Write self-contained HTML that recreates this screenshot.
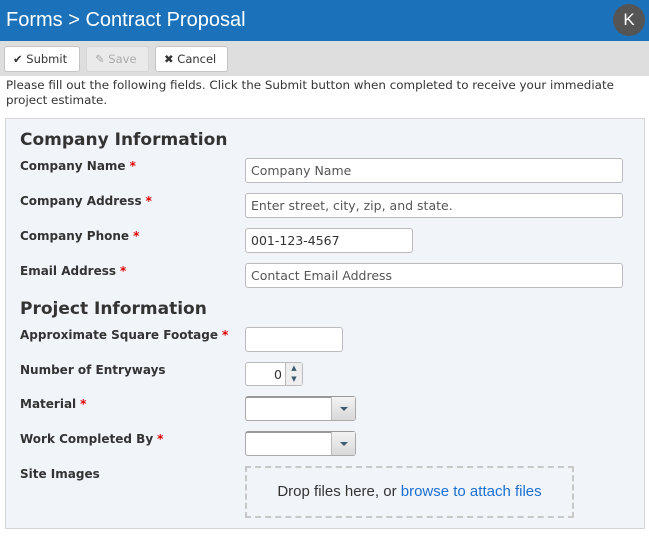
<!DOCTYPE html>
<html><head><style>
*{box-sizing:border-box}
body{margin:0;width:649px;height:537px;background:#fff;font-family:"DejaVu Sans",Verdana,sans-serif;color:#333;overflow:hidden;position:relative}
.hdr{position:absolute;left:0;top:0;width:649px;height:41px;background:#1c72ba;color:#fff;font-family:"Liberation Sans",sans-serif;font-size:20px;line-height:40px;padding-left:6px}
.av{position:absolute;right:4px;top:3px;width:32px;height:32px;border-radius:50%;background:#555;color:#fff;font-size:17px;text-align:center;line-height:32px}
.tb{position:absolute;top:41px;left:0;width:649px;height:35px;background:#dedede}
.btn{position:absolute;top:5px;height:26px;border:1px solid #c5c5c5;border-radius:3px;background:#fff;font-size:11.5px;line-height:24px;padding-left:8px}
.intro{position:absolute;left:6px;top:78px;font-size:11.9px;line-height:15px;color:#333;width:640px}
.panel{position:absolute;left:5px;top:118px;width:640px;height:411px;background:#f1f4f9;border:1px solid #d5d5d5}
h2{position:absolute;left:14px;margin:0;font-size:17px;font-weight:bold;color:#333}
.l{position:absolute;left:14px;font-size:12px;font-weight:bold;color:#333}
.l b{color:#d00;margin-left:4px}
.in{position:absolute;left:239px;height:25px;border:1px solid #bbb;border-radius:3px;background:#fff;font-size:12.5px;color:#555;line-height:23px;padding-left:5px}
.dd{position:absolute;left:239px;width:111px;height:25px;border:1px solid #aaa;border-radius:3px;background:#fff;border-top:2px solid #999}
.dd i{position:absolute;right:0;top:-1px;width:24px;height:23px;border-left:1px solid #bbb;background:linear-gradient(#f3f3f3,#d8d8d8)}
.dd i:after{content:"";position:absolute;left:8px;top:10px;border:4px solid transparent;border-top:4px solid #3b5a70}
</style></head><body>
<div class="hdr">Forms &gt; Contract Proposal<div class="av" style="top:4px">K</div></div>
<div class="tb">
<div class="btn" style="left:4px;width:76px">✔ Submit</div>
<div class="btn" style="left:86px;width:63px;background:#eaeaea;color:#aaa;border-color:#d5d5d5">✎ Save</div>
<div class="btn" style="left:155px;width:73px">✖ Cancel</div>
</div>
<div class="intro">Please fill out the following fields. Click the Submit button when completed to receive your immediate project estimate.</div>
<div class="panel">
<h2 style="top:11px">Company Information</h2>
<div class="l" style="top:40px">Company Name<b>*</b></div>
<div class="in" style="top:39px;width:378px">Company Name</div>
<div class="l" style="top:75px">Company Address<b>*</b></div>
<div class="in" style="top:74px;width:378px">Enter street, city, zip, and state.</div>
<div class="l" style="top:110px">Company Phone<b>*</b></div>
<div class="in" style="top:109px;width:168px;color:#333">001-123-4567</div>
<div class="l" style="top:145px">Email Address<b>*</b></div>
<div class="in" style="top:144px;width:378px">Contact Email Address</div>
<h2 style="top:180px">Project Information</h2>
<div class="l" style="top:209px">Approximate Square Footage<b>*</b></div>
<div class="in" style="top:208px;width:98px"></div>
<div class="l" style="top:244px">Number of Entryways</div>
<div class="in" style="top:243px;width:58px;height:24px;padding:0"><span style="position:absolute;right:20px;top:0;color:#333">0</span><span style="position:absolute;right:0;top:0;width:17px;height:22px;border-left:1px solid #bbb;background:#eee;font-size:7px;line-height:11px;text-align:center;color:#3b5a70">▲<br>▼</span></div>
<div class="l" style="top:278px">Material<b>*</b></div>
<div class="dd" style="top:277px"><i></i></div>
<div class="l" style="top:313px">Work Completed By<b>*</b></div>
<div class="dd" style="top:312px"><i></i></div>
<div class="l" style="top:348px">Site Images</div>
<div style="position:absolute;left:239px;top:347px;width:329px;height:52px;border:2px dashed #c8c8c8;text-align:center;line-height:48px;font-size:15px;color:#333;font-family:'Liberation Sans',sans-serif">Drop files here, or <span style="color:#1a6fd1">browse to attach files</span></div>
</div>
</body></html>
